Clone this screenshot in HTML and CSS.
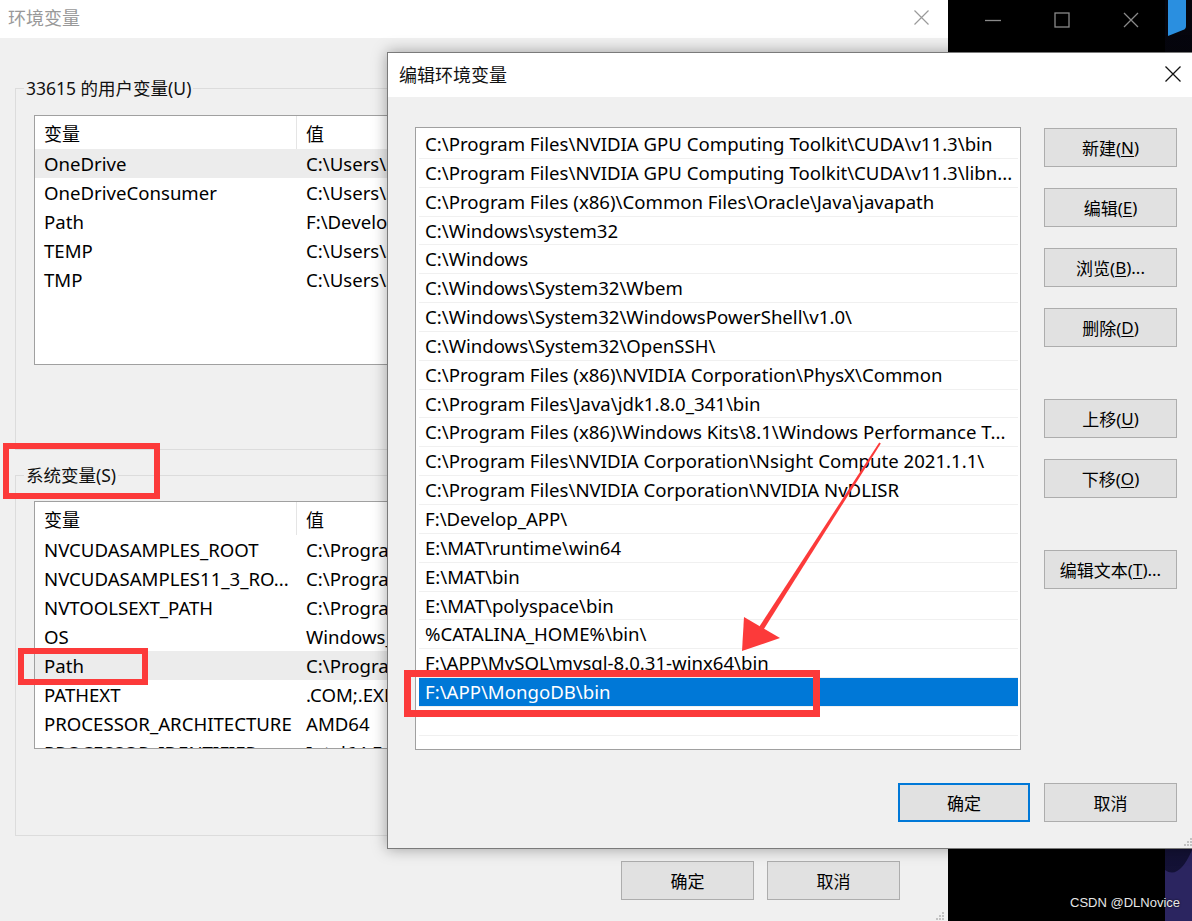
FILE: index.html
```html
<!DOCTYPE html>
<html lang="zh-CN">
<head>
  <meta charset="UTF-8" />
  <title>编辑环境变量</title>
  <link rel="stylesheet" href="styles.css">
</head>
<body>

  <!-- Window behind (dark) -->
  <div class="dark-win">
    <div class="dark-controls">
      <span class="ctl"><svg width="16" height="16" viewBox="0 0 16 16"><line x1="0" y1="8.5" x2="16" y2="8.5" stroke="#8a8a8a" stroke-width="1.3"/></svg></span>
      <span class="ctl"><svg width="16" height="16" viewBox="0 0 16 16"><rect x="1" y="1" width="14" height="14" fill="none" stroke="#8a8a8a" stroke-width="1.3"/></svg></span>
      <span class="ctl"><svg width="16" height="16" viewBox="0 0 16 16"><path d="M1 1 L15 15 M15 1 L1 15" stroke="#8a8a8a" stroke-width="1.3"/></svg></span>
    </div>
  </div>
  <div class="wall-strip">
    <svg width="27" height="921" viewBox="0 0 27 921">
      <path d="M3 0 H21 V26 Q21 29 18 30 L3 36 Z" fill="#2a8fe0"/>
      <path d="M0 870 Q14 880 27 850 V921 H0 Z" fill="#2b2560"/>
    </svg>
  </div>

  <!-- Main window -->
  <div class="main-win">
    <div class="titlebar">
      <span class="title">环境变量</span>
      <svg width="15" height="15" viewBox="0 0 15 15"><path d="M0.5 0.5 L14.5 14.5 M14.5 0.5 L0.5 14.5" stroke="#9a9a9a" stroke-width="1.2"/></svg>
    </div>
    <div class="win-body">
      <fieldset class="group">
        <legend>33615 的用户变量(U)</legend>
        <div class="var-list user-list">
          <div class="var-head"><span class="col-name">变量</span><span class="col-val">值</span></div>
          <div class="var-row sel"><span class="col-name">OneDrive</span><span class="col-val">C:\Users\33</span></div>
          <div class="var-row"><span class="col-name">OneDriveConsumer</span><span class="col-val">C:\Users\33</span></div>
          <div class="var-row"><span class="col-name">Path</span><span class="col-val">F:\Develop</span></div>
          <div class="var-row"><span class="col-name">TEMP</span><span class="col-val">C:\Users\33</span></div>
          <div class="var-row"><span class="col-name">TMP</span><span class="col-val">C:\Users\33</span></div>
        </div>
      </fieldset>

      <fieldset class="group sys-group">
        <legend>系统变量(S)</legend>
        <div class="var-list sys-list">
          <div class="var-head"><span class="col-name">变量</span><span class="col-val">值</span></div>
          <div class="var-row"><span class="col-name">NVCUDASAMPLES_ROOT</span><span class="col-val">C:\Program</span></div>
          <div class="var-row"><span class="col-name">NVCUDASAMPLES11_3_RO...</span><span class="col-val">C:\Program</span></div>
          <div class="var-row"><span class="col-name">NVTOOLSEXT_PATH</span><span class="col-val">C:\Program</span></div>
          <div class="var-row"><span class="col-name">OS</span><span class="col-val">Windows_NT</span></div>
          <div class="var-row sel"><span class="col-name">Path</span><span class="col-val">C:\Program</span></div>
          <div class="var-row"><span class="col-name">PATHEXT</span><span class="col-val">.COM;.EXE</span></div>
          <div class="var-row"><span class="col-name">PROCESSOR_ARCHITECTURE</span><span class="col-val">AMD64</span></div>
          <div class="var-row"><span class="col-name">PROCESSOR_IDENTIFIER</span><span class="col-val">Intel64 Fa</span></div>
        </div>
      </fieldset>

      <div class="main-buttons">
        <button class="btn">确定</button>
        <button class="btn">取消</button>
      </div>
    </div>
    <svg class="grip main-grip" width="10" height="10" viewBox="0 0 10 10"><g fill="#c2c2c2"><rect x="7" y="1" width="2" height="2"/><rect x="4" y="4" width="2" height="2"/><rect x="7" y="4" width="2" height="2"/><rect x="1" y="7" width="2" height="2"/><rect x="4" y="7" width="2" height="2"/><rect x="7" y="7" width="2" height="2"/></g></svg>
  </div>

  <!-- Edit dialog -->
  <div class="dialog">
    <div class="dlg-titlebar">
      <span class="dlg-title">编辑环境变量</span>
      <span class="dlg-close"><svg width="16" height="16" viewBox="0 0 16 16"><path d="M0.5 0.5 L15.5 15.5 M15.5 0.5 L0.5 15.5" stroke="#111" stroke-width="1.3"/></svg></span>
    </div>
    <div class="dlg-body">
      <div class="dlg-main">
        <div class="path-list">
          <div class="path-row">C:\Program Files\NVIDIA GPU Computing Toolkit\CUDA\v11.3\bin</div>
          <div class="path-row">C:\Program Files\NVIDIA GPU Computing Toolkit\CUDA\v11.3\libn...</div>
          <div class="path-row">C:\Program Files (x86)\Common Files\Oracle\Java\javapath</div>
          <div class="path-row">C:\Windows\system32</div>
          <div class="path-row">C:\Windows</div>
          <div class="path-row">C:\Windows\System32\Wbem</div>
          <div class="path-row">C:\Windows\System32\WindowsPowerShell\v1.0\</div>
          <div class="path-row">C:\Windows\System32\OpenSSH\</div>
          <div class="path-row">C:\Program Files (x86)\NVIDIA Corporation\PhysX\Common</div>
          <div class="path-row">C:\Program Files\Java\jdk1.8.0_341\bin</div>
          <div class="path-row">C:\Program Files (x86)\Windows Kits\8.1\Windows Performance T...</div>
          <div class="path-row">C:\Program Files\NVIDIA Corporation\Nsight Compute 2021.1.1\</div>
          <div class="path-row">C:\Program Files\NVIDIA Corporation\NVIDIA NvDLISR</div>
          <div class="path-row">F:\Develop_APP\</div>
          <div class="path-row">E:\MAT\runtime\win64</div>
          <div class="path-row">E:\MAT\bin</div>
          <div class="path-row">E:\MAT\polyspace\bin</div>
          <div class="path-row">%CATALINA_HOME%\bin\</div>
          <div class="path-row">F:\APP\MySQL\mysql-8.0.31-winx64\bin</div>
          <div class="path-row selected">F:\APP\MongoDB\bin</div>
          <div class="path-row"></div>
          <div class="path-row"></div>
        </div>

        <div class="side-buttons">
          <button class="btn">新建(<u>N</u>)</button>
          <button class="btn">编辑(<u>E</u>)</button>
          <button class="btn">浏览(<u>B</u>)...</button>
          <button class="btn">删除(<u>D</u>)</button>
          <button class="btn spaced">上移(<u>U</u>)</button>
          <button class="btn">下移(<u>O</u>)</button>
          <button class="btn spaced">编辑文本(<u>T</u>)...</button>
        </div>
      </div>

      <div class="dlg-footer">
        <button class="btn default">确定</button>
        <button class="btn">取消</button>
      </div>
    </div>
    <svg class="grip dlg-grip" width="10" height="10" viewBox="0 0 10 10"><g fill="#c2c2c2"><rect x="7" y="1" width="2" height="2"/><rect x="4" y="4" width="2" height="2"/><rect x="7" y="4" width="2" height="2"/><rect x="1" y="7" width="2" height="2"/><rect x="4" y="7" width="2" height="2"/><rect x="7" y="7" width="2" height="2"/></g></svg>
  </div>

  <!-- Annotations -->
  <div class="mark mark-sys"></div>
  <div class="mark mark-path"></div>
  <div class="mark mark-mongo"></div>
  <svg class="arrow" width="1192" height="921" viewBox="0 0 1192 921">
    <polygon points="880.8,443.5 879.2,442.5 759.4,626.6 763.6,629.4" fill="#fc3a3a"/>
    <polygon points="742,651 744,617 780,638" fill="#fc3a3a"/>
  </svg>

  <div class="watermark">CSDN @DLNovice</div>

</body>
</html>
```

FILE: styles.css
```css
* {
  box-sizing: border-box;
}

body {
  margin: 0;
  width: 1192px;
  height: 921px;
  overflow: hidden;
  position: relative;
  background-color: #000;
  font-family: "Noto Sans", "Noto Sans CJK SC", sans-serif;
  font-size: 18.6px;
  color: #000;
}

/* desktop behind */
.dark-win {
  position: absolute;
  left: 900px;
  top: 0;
  width: 265px;
  height: 921px;
  background-color: #000;
}

.dark-controls {
  display: flex;
  justify-content: flex-end;
}

.ctl {
  width: 69px;
  height: 40px;
  display: flex;
  align-items: center;
  justify-content: center;
}

.wall-strip {
  position: absolute;
  left: 1165px;
  top: 0;
  width: 27px;
  height: 921px;
  background: linear-gradient(#05050c, #0c0b22 70%, #15133a);
}

.wall-strip svg {
  display: block;
}

/* main window */
.main-win {
  position: absolute;
  left: 0;
  top: 0;
  width: 948px;
  height: 921px;
  background-color: #f0f0f0;
}

.titlebar {
  height: 38px;
  background-color: #fff;
  display: flex;
  align-items: center;
  justify-content: space-between;
  padding: 0 19px 4px 8px;
}

.title {
  color: #999;
  font-size: 18px;
}

.group {
  margin: 38px 15px 0 15px;
  padding: 15px 0 84px 8px;
  border: 1px solid #dcdcdc;
  min-width: 0;
}

.group legend {
  padding: 0 2px;
  font-size: 17.5px;
  line-height: 24px;
  color: #111;
}

.sys-group {
  margin-top: 13px;
  padding-top: 14px;
  padding-bottom: 86px;
}

.var-list {
  margin-left: 10px;
  margin-right: 10px;
  background-color: #fff;
  border: 1px solid #a0a0a0;
  overflow: hidden;
}

.user-list {
  height: 250px;
}

.sys-list {
  height: 248px;
}

.var-head,
.var-row {
  display: flex;
  white-space: nowrap;
}

.var-head {
  height: 33px;
  font-size: 18px;
}

.var-row {
  height: 29px;
  line-height: 26px;
  align-items: center;
}

.col-name {
  flex: none;
  width: 262px;
  padding-left: 9px;
  overflow: hidden;
}

.col-val {
  padding-left: 9px;
}

.var-head span {
  display: flex;
  align-items: center;
}

.var-head .col-name {
  border-right: 1px solid #e5e5e5;
}

.var-row.sel {
  background-color: #ececec;
}

.main-buttons {
  display: flex;
  justify-content: flex-end;
  gap: 13px;
  margin-top: 25px;
  padding-right: 48px;
}

.btn {
  width: 133px;
  height: 39px;
  padding: 0;
  background-color: #e1e1e1;
  border: 1px solid #adadad;
  font-family: "Noto Sans", "Noto Sans CJK SC", sans-serif;
  font-size: 17px;
  color: #000;
  display: flex;
  align-items: center;
  justify-content: center;
}

.btn u {
  text-underline-offset: 2px;
}

.btn.default {
  border: 2px solid #0078d7;
}

.grip {
  position: absolute;
}

.main-grip {
  right: 3px;
  bottom: 0;
}

/* edit dialog */
.dialog {
  position: absolute;
  left: 387px;
  top: 52px;
  width: 812px;
  height: 797px;
  background-color: #f0f0f0;
  border: 1px solid #7a7a7a;
  box-shadow: 0 0 14px rgba(0, 0, 0, 0.35);
}

.dlg-titlebar {
  height: 44px;
  background-color: #fff;
  display: flex;
  align-items: center;
  justify-content: space-between;
  padding: 0 0 2px 11px;
}

.dlg-title {
  font-size: 18px;
  color: #111;
}

.dlg-close {
  width: 50px;
  display: flex;
  justify-content: center;
}

.dlg-body {
  padding: 30px 21px 0 27px;
}

.dlg-main {
  display: flex;
  gap: 23px;
}

.path-list {
  width: 606px;
  height: 623px;
  padding: 2px 2px 2px 3px;
  background-color: #fff;
  border: 1px solid #a0a0a0;
  overflow: hidden;
}

.path-row {
  height: 28.85px;
  line-height: 26px;
  padding-left: 6px;
  padding-top: 1px;
  border-bottom: 1px solid #f0f0f0;
  white-space: nowrap;
  overflow: hidden;
}

.path-row.selected {
  background-color: #0078d7;
  color: #fff;
}

.side-buttons {
  display: flex;
  flex-direction: column;
  gap: 21px;
  padding-top: 1px;
}

.side-buttons .spaced {
  margin-top: 31px;
}

.dlg-footer {
  display: flex;
  justify-content: flex-end;
  gap: 14px;
  margin-top: 33px;
}

.dlg-footer .btn.default {
  width: 132px;
}

.dlg-grip {
  right: 5px;
  bottom: 1px;
}

/* red annotations */
.mark {
  position: absolute;
  border: 6px solid #fc3a3a;
}

.mark-sys {
  left: 3px;
  top: 443px;
  width: 157px;
  height: 56px;
}

.mark-path {
  left: 18px;
  top: 648px;
  width: 130px;
  height: 37px;
}

.mark-mongo {
  left: 404px;
  top: 670px;
  width: 416px;
  height: 47px;
  border-width: 7px;
}

.arrow {
  position: absolute;
  left: 0;
  top: 0;
}

.watermark {
  position: absolute;
  left: 1070px;
  top: 895px;
  font-family: "Liberation Sans", Arial, sans-serif;
  font-size: 13px;
  color: #e6e6e6;
  text-shadow: 0 0 2px #000;
}
```
